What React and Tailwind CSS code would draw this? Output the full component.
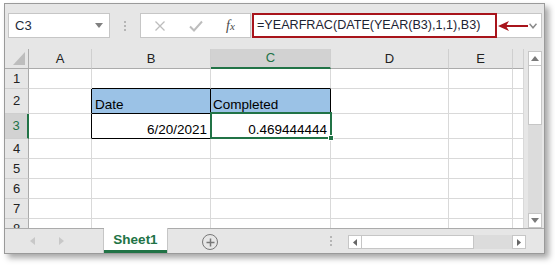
import React from "react";

const font = { fontFamily: '"Liberation Sans", Arial, sans-serif' };

const cols = [
  { key: "hdr", w: "w-[24px]" },
  { key: "A", w: "w-[63px]" },
  { key: "B", w: "w-[119px]" },
  { key: "C", w: "w-[120px]" },
  { key: "D", w: "w-[118px]" },
  { key: "E", w: "w-[64px]" },
  { key: "F", w: "w-[11px]" },
];

const rows = [
  { n: 1, h: "h-[20px]" },
  { n: 2, h: "h-[25px]" },
  { n: 3, h: "h-[25px]" },
  { n: 4, h: "h-[20px]" },
  { n: 5, h: "h-[20px]" },
  { n: 6, h: "h-[20px]" },
  { n: 7, h: "h-[20px]" },
  { n: 8, h: "h-[20px]" },
];

const values = {
  B2: { text: "Date", align: "justify-start pl-[3px]" },
  C2: { text: "Completed", align: "justify-start pl-[2px]" },
  B3: { text: "6/20/2021", align: "justify-end pr-[3px]" },
  C3: { text: "0.469444444", align: "justify-end pr-[3px]" },
};

const boxed = ["B2", "C2", "B3", "C3"];

function Cell({ col, row }) {
  const id = col.key + row.n;
  const inBox = boxed.includes(id);
  const rightBlack = inBox || id === "A2" || id === "A3";
  const bottomBlack = inBox || id === "B1" || id === "C1";
  const fill = row.n === 2 && (col.key === "B" || col.key === "C") ? "bg-[#9bc2e6]" : "bg-white";
  const v = values[id];
  return (
    <div
      className={`${col.w} ${row.h} shrink-0 border-r border-b flex items-end pb-[2px] text-[13.5px] text-black ${fill} ${
        rightBlack ? "border-r-black" : "border-r-[#d9d9d9]"
      } ${bottomBlack ? "border-b-black" : "border-b-[#d9d9d9]"} ${v ? v.align : ""}`}
    >
      {v && <span className="leading-none">{v.text}</span>}
    </div>
  );
}

function Grid() {
  return (
    <div className="relative w-[519px] h-[179px] overflow-hidden bg-white">
      {/* column headers */}
      <div className="flex h-[20px]">
        <div className="w-[24px] h-[20px] shrink-0 bg-[#e6e6e6] border-r border-b border-[#ababab] relative">
          <svg width="24" height="20" className="absolute left-0 top-0">
            <polygon points="20,3 20,16 8,16" fill="#bdbdbd" />
          </svg>
        </div>
        {cols.slice(1).map((c) => (
          <div
            key={c.key}
            className={`${c.w} h-[20px] shrink-0 flex items-center justify-center text-[13px] border-r border-r-[#cfcfcf] ${
              c.key === "C"
                ? "bg-[#d2d2d2] border-b-2 border-b-[#217346] text-[#217346]"
                : "bg-[#e6e6e6] border-b border-b-[#ababab] text-[#222]"
            }`}
          >
            {c.key === "F" ? "" : c.key}
          </div>
        ))}
      </div>
      {rows.map((r) => (
        <div key={r.n} className={`flex ${r.h}`}>
          <div
            className={`w-[24px] ${r.h} shrink-0 flex items-center justify-center text-[13px] border-b border-b-[#cfcfcf] ${
              r.n === 3
                ? "bg-[#d2d2d2] border-r-2 border-r-[#217346] text-[#217346]"
                : "bg-[#e6e6e6] border-r border-r-[#ababab] text-[#222]"
            }`}
          >
            {r.n}
          </div>
          {cols.slice(1).map((c) => (
            <Cell key={c.key} col={c} row={r} />
          ))}
        </div>
      ))}
      {/* active cell selection */}
      <div className="absolute left-[205px] top-[63px] w-[122px] h-[27px] border-2 border-[#217346]" />
      <div className="absolute left-[323px] top-[86px] w-[6px] h-[6px] bg-[#217346] border border-white" />
    </div>
  );
}

function VScroll() {
  return (
    <div className="w-[20px] h-[179px] flex flex-col pl-[4px] pr-[2px] pt-[2px]">
      <div className="h-[15px] bg-white border border-[#c6c6c6] flex items-center justify-center">
        <svg width="8" height="5"><polygon points="0,5 8,5 4,0" fill="#7a7a7a" /></svg>
      </div>
      <div className="h-[59px] bg-white border-x border-b border-[#c6c6c6]" />
      <div className="flex-1 bg-[#dcdcdc]" />
      <div className="h-[15px] bg-white border border-[#c6c6c6] flex items-center justify-center">
        <svg width="8" height="5"><polygon points="0,0 8,0 4,5" fill="#7a7a7a" /></svg>
      </div>
    </div>
  );
}

function Toolbar() {
  return (
    <div className="h-[45px] flex items-start pt-[9px]">
      <div className="ml-[3px] w-[102px] h-[25px] bg-white border border-[#c6c6c6] flex items-center justify-between pl-[6px] pr-[6px]">
        <span className="text-[13px] text-[#1e2a3a]">C3</span>
        <svg width="8" height="5"><polygon points="0,0 8,0 4,5" fill="#808080" /></svg>
      </div>
      <div className="w-[30px] h-[25px] flex flex-col items-center justify-center gap-[2px]">
        <div className="w-[2px] h-[2px] bg-[#b5b5b5]" />
        <div className="w-[2px] h-[2px] bg-[#b5b5b5]" />
        <div className="w-[2px] h-[2px] bg-[#b5b5b5]" />
      </div>
      <div className="w-[111px] h-[25px] bg-white border border-[#c6c6c6] flex items-center">
        <svg width="12" height="12" viewBox="0 0 12 12" className="ml-[13px]">
          <path d="M1.5 1.5 L10.5 10.5 M10.5 1.5 L1.5 10.5" stroke="#bdbdbd" strokeWidth="1.3" fill="none" />
        </svg>
        <svg width="14" height="12" viewBox="0 0 14 12" className="ml-[23px]">
          <path d="M1 6.5 L5 10.5 L13 1.5" stroke="#bdbdbd" strokeWidth="2" fill="none" />
        </svg>
        <span
          className="ml-[23px] text-[14px] italic text-[#4a4a4a] leading-none"
          style={{ fontFamily: '"Liberation Serif", "Times New Roman", serif' }}
        >
          f<span className="text-[11px]">x</span>
        </span>
      </div>
      <div className="ml-[1px] w-[290px] h-[25px] bg-white border-y border-r border-[#c6c6c6] flex items-center">
        <div className="w-[245px] h-[25px] -my-px border-2 border-[#a8141b] flex items-center pl-[3px] shrink-0">
          <span className="text-[12.6px] text-[#1c2333] whitespace-nowrap">=YEARFRAC(DATE(YEAR(B3),1,1),B3)</span>
        </div>
        <svg width="30" height="12" viewBox="0 0 30 12" className="ml-[1px] shrink-0">
          <line x1="6" y1="6" x2="30" y2="6" stroke="#a8141b" strokeWidth="2" />
          <polygon points="0,6 11,1 8,6 11,11" fill="#a8141b" />
        </svg>
        <svg width="8" height="6" viewBox="0 0 8 6" className="ml-[1px] shrink-0">
          <path d="M0.5 0.8 L4 4.8 L7.5 0.8" stroke="#8a8a8a" strokeWidth="1.5" fill="none" />
        </svg>
      </div>
    </div>
  );
}

function TabBar() {
  return (
    <div className="h-[25px] flex items-start border-t border-[#ababab]">
      <div className="w-[99px] h-[24px] border-r border-[#c6c6c6] flex items-center">
        <svg width="5" height="8" className="ml-[25px]"><polygon points="5,0 5,8 0,4" fill="#c8c8c8" /></svg>
        <svg width="5" height="8" className="ml-[24px]"><polygon points="0,0 0,8 5,4" fill="#c8c8c8" /></svg>
      </div>
      <div className="w-[64px] h-[25px] -mt-px bg-white border-r border-[#c6c6c6] flex flex-col">
        <div className="flex-1 flex items-center justify-center pt-[2px]">
          <span className="text-[13.5px] font-bold text-[#217346]">Sheet1</span>
        </div>
        <div className="h-[3px] bg-[#217346]" />
      </div>
      <div className="ml-[34px] mt-[5px] w-[16px] h-[16px] rounded-full border-[1.5px] border-[#777] flex items-center justify-center">
        <svg width="9" height="9" viewBox="0 0 9 9">
          <path d="M4.5 0.5 V8.5 M0.5 4.5 H8.5" stroke="#777" strokeWidth="1.5" />
        </svg>
      </div>
      <div className="ml-[112px] mt-[7px] flex flex-col gap-[2px]">
        <div className="w-[2px] h-[2px] bg-[#b5b5b5]" />
        <div className="w-[2px] h-[2px] bg-[#b5b5b5]" />
        <div className="w-[2px] h-[2px] bg-[#b5b5b5]" />
      </div>
      <div className="ml-[16px] mt-[6px] flex h-[14px]">
        <div className="w-[14px] h-[14px] bg-white border border-[#c6c6c6] flex items-center justify-center">
          <svg width="4" height="7"><polygon points="4,0 4,7 0,3.5" fill="#666" /></svg>
        </div>
        <div className="w-[112px] h-[14px] bg-white border-y border-r border-[#c6c6c6]" />
        <div className="w-[38px] h-[14px] bg-[#dcdcdc]" />
        <div className="w-[14px] h-[14px] bg-white border border-[#c6c6c6] flex items-center justify-center">
          <svg width="4" height="7"><polygon points="0,0 0,7 4,3.5" fill="#666" /></svg>
        </div>
      </div>
    </div>
  );
}

export default function App() {
  return (
    <div className="w-[555px] h-[265px] bg-white overflow-hidden pl-[4px] pt-[3px]" style={font}>
      <div className="w-[541px] h-[251px] bg-[#e6e6e6] border border-[#9a9a9a] shadow-[4px_4px_6px_rgba(0,0,0,0.35)] flex flex-col">
        <Toolbar />
        <div className="flex">
          <Grid />
          <VScroll />
        </div>
        <TabBar />
      </div>
    </div>
  );
}
